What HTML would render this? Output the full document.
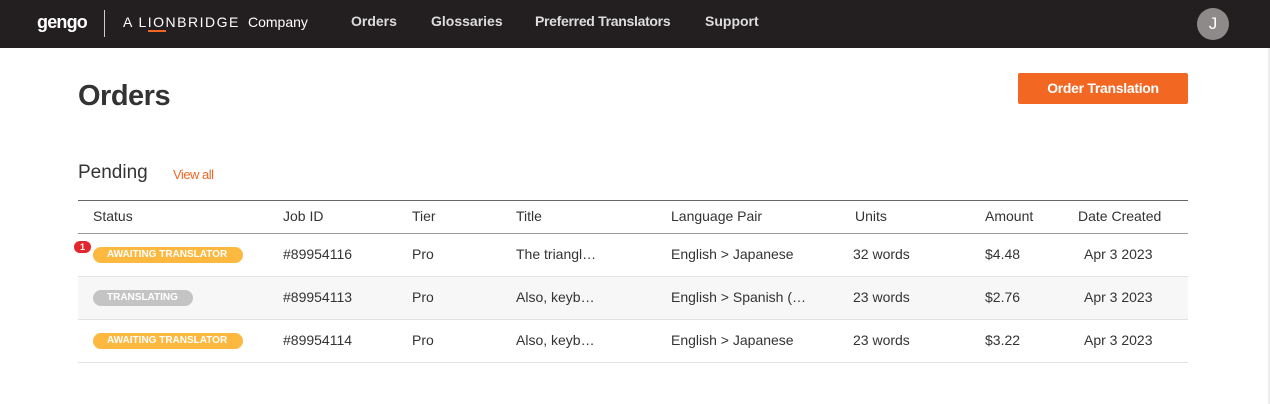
<!DOCTYPE html>
<html><head><style>
*{margin:0;padding:0;box-sizing:border-box}
body{width:1270px;height:404px;background:#fff;font-family:"Liberation Sans",Arial,sans-serif;color:#333;position:relative;overflow:hidden}
.nav{position:absolute;left:0;top:0;width:1270px;height:48px;background:#231f20}
.nav span{position:absolute;color:#fff}
.t{position:absolute;white-space:nowrap}
.line{position:absolute;left:78px;width:1110px;height:1px;background:#e3e3e3}
.pill{position:absolute;height:16px;border-radius:8px;color:#fff;font-size:10px;line-height:16px;padding-left:14px;font-weight:bold}
.cell{position:absolute;font-size:14px;color:#333;white-space:nowrap}
</style></head><body>
<div class="nav">
<span style="left:37px;top:12px;font-size:18px;font-weight:bold;letter-spacing:-0.8px">gengo</span>
<div style="position:absolute;left:104px;top:10px;width:1px;height:27px;background:#ccc"></div>
<span style="left:123px;top:14px;font-size:14px;letter-spacing:1.5px">A L<span style="position:static;border-bottom:2px solid #f26722">IO</span>NBRIDGE</span>
<span style="left:248px;top:14px;font-size:14px">Company</span>
<span style="left:351px;top:13px;font-size:14px;font-weight:bold;color:#ddd">Orders</span>
<span style="left:431px;top:13px;font-size:14px;font-weight:bold;color:#ddd">Glossaries</span>
<span style="left:535px;top:13px;font-size:14px;font-weight:bold;color:#ddd;letter-spacing:-0.3px">Preferred Translators</span>
<span style="left:705px;top:13px;font-size:14px;font-weight:bold;color:#ddd">Support</span>
<div style="position:absolute;left:1197px;top:8px;width:32px;height:32px;border-radius:50%;background:#8e8a8a;color:#fff;font-size:17px;text-align:center;line-height:32px">J</div>
</div>
<div style="position:absolute;right:0;top:48px;width:2px;height:356px;background:#eee"></div>
<div class="t" style="left:78px;top:80px;font-size:29px;font-weight:bold;color:#333;letter-spacing:-0.5px">Orders</div>
<div style="position:absolute;left:1018px;top:73px;width:170px;height:31px;background:#f26722;border-radius:2px;color:#fff;font-size:14px;font-weight:bold;text-align:center;line-height:31px;letter-spacing:-0.3px">Order Translation</div>
<div class="t" style="left:78px;top:162px;font-size:19px;color:#333">Pending</div>
<div class="t" style="left:173px;top:167px;font-size:13px;color:#f26722;letter-spacing:-0.5px">View all</div>
<div class="line" style="top:200px;background:#666"></div>
<div class="cell" style="left:93px;top:208px">Status</div>
<div class="cell" style="left:283px;top:208px">Job ID</div>
<div class="cell" style="left:412px;top:208px">Tier</div>
<div class="cell" style="left:516px;top:208px">Title</div>
<div class="cell" style="left:671px;top:208px">Language Pair</div>
<div class="cell" style="left:855px;top:208px">Units</div>
<div class="cell" style="left:985px;top:208px">Amount</div>
<div class="cell" style="left:1078px;top:208px">Date Created</div>
<div class="line" style="top:233px;background:#999"></div>
<div style="position:absolute;left:78px;top:277px;width:1110px;height:42px;background:#f7f7f7"></div>
<div class="line" style="top:276px"></div>
<div class="line" style="top:319px"></div>
<div class="line" style="top:362px"></div>

<div class="pill" style="left:93px;top:247px;width:150px;background:#fdb83f">AWAITING TRANSLATOR</div>
<div style="position:absolute;left:74px;top:241px;width:17px;height:12px;border-radius:6px;background:#e3262e;color:#fff;font-size:9px;font-weight:bold;text-align:center;line-height:12px">1</div>
<div class="pill" style="left:93px;top:290px;width:100px;background:#c4c4c4">TRANSLATING</div>
<div class="pill" style="left:93px;top:333px;width:150px;background:#fdb83f">AWAITING TRANSLATOR</div>

<div class="cell" style="left:283px;top:246px">#89954116</div>
<div class="cell" style="left:412px;top:246px">Pro</div>
<div class="cell" style="left:516px;top:246px">The triangl…</div>
<div class="cell" style="left:671px;top:246px">English &gt; Japanese</div>
<div class="cell" style="left:853px;top:246px">32 words</div>
<div class="cell" style="left:985px;top:246px">$4.48</div>
<div class="cell" style="left:1084px;top:246px">Apr 3 2023</div>

<div class="cell" style="left:283px;top:289px">#89954113</div>
<div class="cell" style="left:412px;top:289px">Pro</div>
<div class="cell" style="left:516px;top:289px">Also, keyb…</div>
<div class="cell" style="left:671px;top:289px">English &gt; Spanish (…</div>
<div class="cell" style="left:853px;top:289px">23 words</div>
<div class="cell" style="left:985px;top:289px">$2.76</div>
<div class="cell" style="left:1084px;top:289px">Apr 3 2023</div>

<div class="cell" style="left:283px;top:332px">#89954114</div>
<div class="cell" style="left:412px;top:332px">Pro</div>
<div class="cell" style="left:516px;top:332px">Also, keyb…</div>
<div class="cell" style="left:671px;top:332px">English &gt; Japanese</div>
<div class="cell" style="left:853px;top:332px">23 words</div>
<div class="cell" style="left:985px;top:332px">$3.22</div>
<div class="cell" style="left:1084px;top:332px">Apr 3 2023</div>
</body></html>
